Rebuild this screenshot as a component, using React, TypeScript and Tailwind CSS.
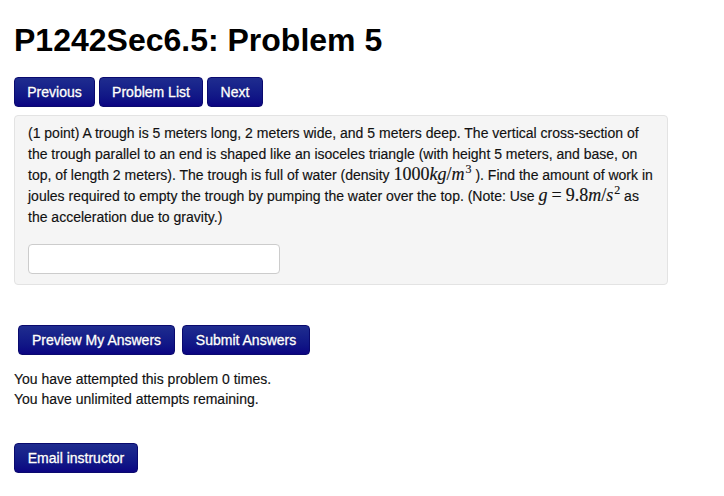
import type { ReactNode } from "react";

function NavButton({ children, className = "" }: { children: ReactNode; className?: string }) {
  return (
    <button
      type="button"
      className={
        "h-[30px] rounded-[4px] border border-[#0a0a6e] bg-gradient-to-b from-[#1f2c8f] to-[#0c0482] px-[12px] text-[14px] leading-none text-white [-webkit-text-stroke:0.3px_white] [text-shadow:0_-1px_0_rgba(0,0,0,0.3)] " +
        className
      }
    >
      {children}
    </button>
  );
}

function M({ children }: { children: ReactNode }) {
  return <span className="font-['Liberation_Serif',serif] text-[18px] leading-none">{children}</span>;
}

function Sup({ children }: { children: ReactNode }) {
  return <span className="relative top-[-7px] ml-[1px] text-[12px] leading-none">{children}</span>;
}

export default function App() {
  return (
    <div className="min-h-[496px] bg-white px-[14px] font-['Liberation_Sans',Arial,sans-serif] text-[#111]">
      <h1 className="pt-[21px] text-[32px] font-bold leading-[38px] text-black">P1242Sec6.5: Problem 5</h1>

      <div className="mt-[18px] flex gap-[4px]">
        <NavButton className="w-[81px] px-0">Previous</NavButton>
        <NavButton className="w-[104px] px-0">Problem List</NavButton>
        <NavButton className="w-[56px] px-0">Next</NavButton>
      </div>

      <div className="mt-[8px] w-[654px] rounded-[4px] border border-[#e3e3e3] bg-[#f5f5f5] px-[13px] pb-[10px] pt-[7px]">
        <p className="text-[14px] leading-[21px] [-webkit-text-stroke:0.15px_#111]">
          (1 point) A trough is 5 meters long, 2 meters wide, and 5 meters deep. The vertical cross-section of the
          trough parallel to an end is shaped like an isoceles triangle (with height 5 meters, and base, on top, of
          length 2 meters). The trough is full of water (density{" "}
          <M>
            1000<i>kg</i>/<i>m</i>
            <Sup>3</Sup>
          </M>{" "}
          ). Find the amount of work in joules required to empty the trough by pumping the water over the top. (Note:
          Use{" "}
          <M>
            <i>g</i>
            <span className="mx-[4px]">=</span>9.8<i>m</i>/<i>s</i>
            <Sup>2</Sup>
          </M>{" "}
          as the acceleration due to gravity.)
        </p>
        <input
          type="text"
          className="mt-[16px] block h-[30px] w-[252px] rounded-[4px] border border-[#cccccc] bg-white"
        />
      </div>

      <div className="ml-[4px] mt-[40px] flex gap-[7px]">
        <NavButton className="w-[157px] px-0">Preview My Answers</NavButton>
        <NavButton className="w-[128px] px-0">Submit Answers</NavButton>
      </div>

      <div className="mt-[14px] text-[14px] leading-[20px] [-webkit-text-stroke:0.15px_#111]">
        <div>You have attempted this problem 0 times.</div>
        <div>You have unlimited attempts remaining.</div>
      </div>

      <div className="mt-[34px]">
        <NavButton className="w-[124px] px-0">Email instructor</NavButton>
      </div>
    </div>
  );
}
